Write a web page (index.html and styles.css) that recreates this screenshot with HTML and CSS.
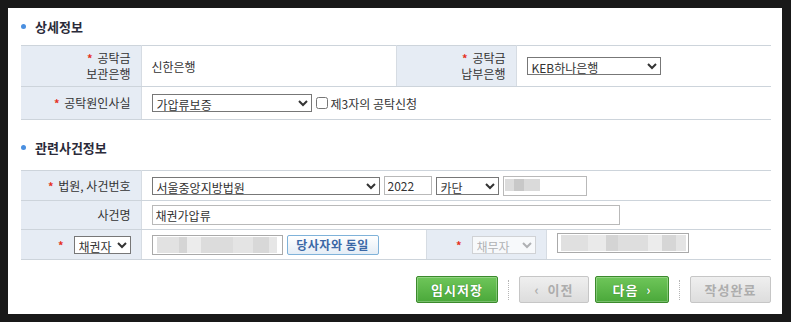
FILE: index.html
```html
<!DOCTYPE html>
<html>
<head>
  <meta charset="utf-8">
  <title>공탁신청</title>
  <link rel="stylesheet" href="styles.css">
</head>
<body>
  <div class="panel">
    <h3 class="sec-title">상세정보</h3>
    <table class="form-table t1">
      <colgroup><col class="c-label"><col class="c-val1"><col class="c-label"><col></colgroup>
      <tr class="r-tall">
        <th><span class="req">*</span> 공탁금<br>보관은행</th>
        <td>신한은행</td>
        <th><span class="req">*</span> 공탁금<br>납부은행</th>
        <td>
          <select class="sel w-bank"><option>KEB하나은행</option></select>
        </td>
      </tr>
      <tr class="r-mid">
        <th><span class="req">*</span> 공탁원인사실</th>
        <td colspan="3">
          <div class="inline">
            <select class="sel w-cause"><option>가압류보증</option></select>
            <label class="chk"><input type="checkbox"> 제3자의 공탁신청</label>
          </div>
        </td>
      </tr>
    </table>

    <h3 class="sec-title second">관련사건정보</h3>
    <table class="form-table t2">
      <colgroup><col class="c-label"><col class="c-val2"><col class="c-label"><col></colgroup>
      <tr class="r-a">
        <th><span class="req">*</span> 법원, 사건번호</th>
        <td colspan="3">
          <div class="inline">
            <select class="sel w-court"><option>서울중앙지방법원</option></select>
            <input class="txt w-year" type="text" value="2022">
            <select class="sel w-kind"><option>카단</option></select>
            <span class="txt blur w-no"></span>
          </div>
        </td>
      </tr>
      <tr class="r-b">
        <th>사건명</th>
        <td colspan="3"><input class="txt w-name" type="text" value="채권가압류"></td>
      </tr>
      <tr class="r-a">
        <th>
          <div class="inline end">
            <span class="req">*</span>
            <select class="sel w-party"><option>채권자</option></select>
          </div>
        </th>
        <td>
          <div class="inline">
            <span class="txt blur w-creditor"></span>
            <button class="btn-same" type="button">당사자와 동일</button>
          </div>
        </td>
        <th>
          <div class="inline end">
            <span class="req">*</span>
            <select class="sel w-party2" disabled><option>채무자</option></select>
          </div>
        </th>
        <td><span class="txt blur w-debtor"></span></td>
      </tr>
    </table>

    <div class="actions">
      <button class="btn green w-save" type="button">임시저장</button>
      <span class="sep"></span>
      <button class="btn gray w-prev" type="button">&lsaquo;&nbsp; 이전</button>
      <button class="btn green w-next" type="button">다음 &nbsp;&rsaquo;</button>
      <span class="sep"></span>
      <button class="btn gray w-done" type="button">작성완료</button>
    </div>
  </div>
</body>
</html>
```

FILE: styles.css
```css
body {
  margin: 0;
  background-color: #191919;
  font-family: "Noto Sans CJK KR", "Noto Sans", sans-serif;
  font-size: 12px;
  color: #333;
}

.panel {
  margin: 8px 9px 8px 8px;
  height: 306px;
  background-color: #fff;
  padding: 0 11px 0 13px;
  box-sizing: border-box;
  overflow: hidden;
}

.sec-title {
  display: flex;
  align-items: center;
  margin: 0;
  padding: 10px 0 10px 0;
  height: 17px;
  line-height: 17px;
  font-size: 13px;
  font-weight: bold;
  color: #2b2b3a;
}

.sec-title::before {
  content: "";
  width: 5px;
  height: 5px;
  margin-right: 9px;
  border-radius: 50%;
  background-color: #4a8fe0;
}

.sec-title.second {
  padding-top: 19px;
  padding-bottom: 14px;
}

.form-table {
  width: 100%;
  border-collapse: collapse;
  table-layout: fixed;
}

.form-table th,
.form-table td {
  border-top: 1px solid #cdd4db;
  border-bottom: 1px solid #cdd4db;
  padding: 0;
  vertical-align: middle;
}

.form-table th {
  background-color: #e6ecf4;
  font-weight: normal;
  text-align: right;
  padding-right: 10px;
  line-height: 16px;
  border-right: 1px solid #d6dce3;
}

.form-table td {
  text-align: left;
  padding-left: 10px;
  border-right: 1px solid #d6dce3;
}

.form-table td:last-child {
  border-right: none;
}

.c-label { width: 120px; }
.c-val1 { width: 255px; }
.c-val2 { width: 285px; }

.t1 .r-tall { height: 41px; }
.t1 .r-mid { height: 33px; }
.t2 .r-a { height: 30px; }
.t2 .r-b { height: 29px; }

.req {
  color: #e5321f;
  font-weight: bold;
  font-size: 11px;
  margin-right: 2px;
}

.inline {
  display: flex;
  align-items: center;
  gap: 4px;
}

.inline.end {
  justify-content: flex-end;
  gap: 8px;
}

.sel {
  height: 18px;
  border: 1px solid #777;
  border-radius: 0;
  background-color: #fff;
  font-family: inherit;
  font-size: 12px;
  color: #333;
  padding: 0;
  margin: 0;
}

.sel:disabled {
  border-color: #c8c8c8;
  color: #999;
}

.txt {
  display: inline-block;
  height: 20px;
  box-sizing: border-box;
  border: 1px solid #b9b9b9;
  font-family: inherit;
  font-size: 12px;
  color: #333;
  padding: 0 3px;
  margin: 0;
}

.blur {
  padding: 0;
  border-color: #b9b9b9;
}

.w-bank { width: 134px; }
.w-cause { width: 160px; }
.w-court { width: 228px; }
.w-year { width: 48px; height: 19px; }
.w-kind { width: 63px; }
.w-no {
  width: 84px;
  background-image: linear-gradient(to right, #fff 0 1px, #dcdcdc 1px 10px, #c8c8c8 10px 20px, #dadada 20px 36px, #fff 36px);
  background-size: 100% 12px;
  background-repeat: no-repeat;
  background-position: 0 2px;
}
.w-name { width: 468px; }
.w-party { width: 57px; }
.w-party2 { width: 64px; }
.w-creditor {
  width: 131px;
  border-color: #aaa;
  background-image: linear-gradient(to right, #fff 0 4px, #e2e2e2 4px 26px, #d5d5d5 26px 34px, #ececec 34px 48px, #dcdcdc 48px 80px, #e4e4e4 80px 100px, #d8d8d8 100px 116px, #e6e6e6 116px 124px, #fff 124px);
  background-size: 100% 16px;
  background-repeat: no-repeat;
  background-position: 0 1px;
}
.w-debtor {
  width: 132px;
  border-color: #aaa;
  background-image: linear-gradient(to right, #fff 0 3px, #e0e0e0 3px 30px, #eaeaea 30px 48px, #d4d4d4 48px 60px, #dedede 60px 90px, #ececec 90px 104px, #d6d6d6 104px 118px, #e4e4e4 118px 128px, #fff 128px);
  background-size: 100% 16px;
  background-repeat: no-repeat;
  background-position: 0 1px;
}

.chk {
  display: flex;
  align-items: center;
  gap: 3px;
  color: #333;
}

.chk input {
  margin: 0;
  width: 12px;
  height: 12px;
}

.btn-same {
  height: 20px;
  width: 92px;
  border: 1px solid #7fb2d9;
  border-radius: 2px;
  background: linear-gradient(#ffffff, #e4edf6);
  color: #3b68a6;
  font-family: inherit;
  font-weight: bold;
  font-size: 12px;
  padding: 0;
  letter-spacing: 0.5px;
}

.actions {
  display: flex;
  justify-content: flex-end;
  align-items: center;
  margin-top: 16px;
  gap: 6px;
}

.btn {
  height: 27px;
  border-radius: 2px;
  font-family: inherit;
  font-weight: bold;
  font-size: 13px;
  padding: 0;
  letter-spacing: 1px;
}

.btn.green {
  border: 1px solid #3b8a2c;
  background: linear-gradient(#6fc65a, #4aa83a);
  color: #fff;
  box-shadow: inset 0 0 0 1px rgba(255, 255, 255, 0.25);
  text-shadow: 0 0 1px rgba(0, 60, 0, 0.5);
}

.btn.gray {
  border: 1px solid #c6c6c6;
  background: linear-gradient(#efefef, #dddddd);
  color: #adadad;
}

.w-save { width: 82px; }
.w-prev { width: 70px; }
.w-next { width: 74px; }
.w-done { width: 81px; }

.sep {
  width: 0;
  height: 20px;
  border-left: 1px dotted #b5b5b5;
  margin: 0 4px;
}
```
